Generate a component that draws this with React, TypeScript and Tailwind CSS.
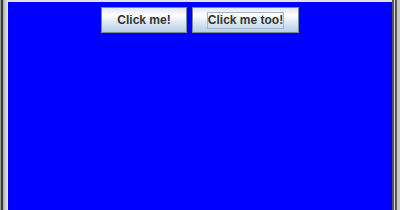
import React from "react";

function MetalButton({ label, width, focused }: { label: string; width: string; focused?: boolean }) {
  return (
    <button
      type="button"
      className={`${width} h-[26px] flex items-center justify-center border border-[#7a8a99] bg-[linear-gradient(to_bottom,#dde8f3_0%,#ffffff_30%,#dde8f3_60%,#b8cfe5_100%)] text-[12px] font-bold text-[#333333] font-['Liberation_Sans',Arial,sans-serif]`}
    >
      {focused ? (
        <span className="border border-[#a3b8cc] h-[17px] leading-[15px] px-0">{label}</span>
      ) : (
        <span className="leading-[15px]">{label}</span>
      )}
    </button>
  );
}

export default function App() {
  return (
    <div className="w-[400px] h-[210px] flex overflow-hidden bg-[#e4e6e8]">
      {/* left window edge */}
      <div className="w-[8px] flex">
        <div className="w-[1px] bg-[#9a9a9a]" />
        <div className="w-[2px] bg-[#3a3a3a]" />
        <div className="w-[5px] bg-[linear-gradient(to_right,#a8a8a8,#eef0f2)]" />
      </div>

      <div className="flex-1 flex flex-col">
        <div className="h-[2px] bg-[#e2e5e8]" />
        <div className="flex-1 bg-[#0000ff] flex justify-center items-start gap-[5px] pt-[5px]">
          <MetalButton label="Click me!" width="w-[86px]" />
          <MetalButton label="Click me too!" width="w-[107px]" focused />
        </div>
      </div>

      {/* right window edge */}
      <div className="w-[8px] flex">
        <div className="w-[2px] bg-[#555555]" />
        <div className="w-[1px] bg-[#d0d0d0]" />
        <div className="w-[2px] bg-[#555555]" />
        <div className="w-[3px] bg-[#c8c8c8]" />
      </div>
    </div>
  );
}
